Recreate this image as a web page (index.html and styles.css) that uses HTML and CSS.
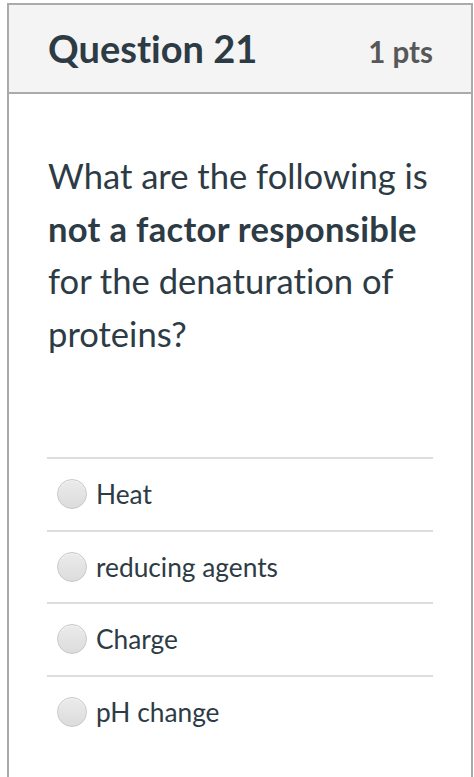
FILE: index.html
```html
<!DOCTYPE html>
<html>
<head>
<meta charset="utf-8">
<link rel="stylesheet" href="styles.css">
</head>
<body>
<div class="card">
  <div class="header">
    <h2 class="title">Question 21</h2>
    <span class="pts">1 pts</span>
  </div>
  <div class="content">
    <p class="question">What are the following is <strong>not a factor responsible</strong> for the denaturation of proteins?</p>
    <div class="answers">
      <label class="answer"><span class="radio"></span><span class="label">Heat</span></label>
      <label class="answer"><span class="radio"></span><span class="label">reducing agents</span></label>
      <label class="answer"><span class="radio"></span><span class="label">Charge</span></label>
      <label class="answer"><span class="radio"></span><span class="label">pH change</span></label>
    </div>
  </div>
</div>
</body>
</html>
```

FILE: styles.css
```css
html, body {
  margin: 0;
  padding: 0;
  background: #ffffff;
}
body {
  font-family: Lato, "Open Sans", sans-serif;
  font-variant-ligatures: none;
  color: #2d3b45;
  overflow: hidden;
}
.card {
  margin: 3px 0 0 7px;
  width: 466px;
  box-sizing: border-box;
  height: 800px;
  border: 2px solid #ababab;
  border-bottom: none;
}
.header {
  display: flex;
  justify-content: space-between;
  align-items: baseline;
  height: 87px;
  box-sizing: content-box;
  background: #f4f4f4;
  border-bottom: 2px solid #ababab;
  padding: 0 38px 0 39px;
}
.title {
  margin: 0;
  font-size: 38px;
  font-weight: 700;
  line-height: 87px;
  color: #2d3b45;
}
.pts {
  font-size: 29.5px;
  font-weight: 700;
  color: #585858;
}
.content {
  padding: 56px 38px 0 38px;
}
.question {
  margin: 0 0 97px 1px;
  font-size: 34.6px;
  line-height: 52.5px;
}
.question strong {
  font-weight: 700;
  letter-spacing: 0.3px;
}
.answers {
  display: flex;
  flex-direction: column;
}
.answer {
  display: flex;
  align-items: center;
  gap: 9px;
  height: 70.5px;
  padding-left: 10px;
  border-top: 2px solid #dddddd;
}
.radio {
  width: 30px;
  height: 30px;
  box-sizing: border-box;
  border-radius: 50%;
  border: 1px solid #c8c8c8;
  background: linear-gradient(#ebebeb, #dcdcdc);
  box-shadow: inset 0 1px 1px rgba(255,255,255,0.6);
}
.label {
  font-size: 26.3px;
  color: #2d3b45;
}
```
